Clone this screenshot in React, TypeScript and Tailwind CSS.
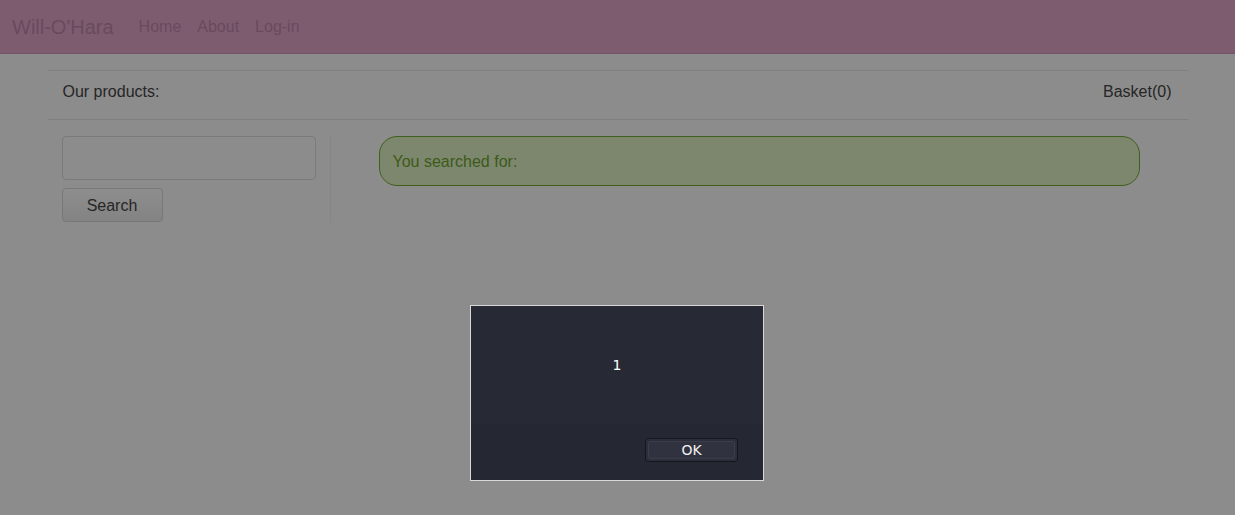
export default function App() {
  return (
    <div className="relative w-[1235px] h-[515px] overflow-hidden bg-[#8c8c8c] font-['Liberation_Sans',Arial,sans-serif]">
      {/* navbar */}
      <div className="h-[54px] bg-[#7e5c70] border-b border-[#74546a] flex items-center px-[12px]">
        <span className="text-[20px] text-[#694a5c] mr-[25px]">Will-O'Hara</span>
        <nav className="flex gap-[16px] text-[16px] text-[#694a5c]">
          <span>Home</span>
          <span>About</span>
          <span>Log-in</span>
        </nav>
      </div>

      <div className="w-[1140px] mx-auto mt-[16px]">
        <div className="h-[50px] border-y border-[#7f7f7f] flex items-center justify-between pl-[15px] pr-[16px] pb-[6px] text-[16px] text-[#262626]">
          <span>Our products:</span>
          <span>Basket(0)</span>
        </div>

        <div className="flex pt-[16px] pl-[14px]">
          <div className="w-[269px] border-r border-[#858585] flex flex-col">
            <div className="w-[254px] h-[44px] rounded-[4px] border border-[#7a7a7a] bg-[#8c8c8c]" />
            <button className="mt-[8px] w-[101px] h-[34px] rounded-[4px] border border-[#787878] bg-gradient-to-b from-[#8e8e8e] to-[#838383] text-[16px] text-[#262626] pt-[2px]">
              Search
            </button>
          </div>
          <div className="ml-[48px] w-[761px] h-[50px] rounded-[18px] border border-[#3f5f1c] bg-[#7c876d] flex items-center px-[13px] pt-[2px] text-[16px] text-[#3d5a1a]">
            You searched for:
          </div>
        </div>
      </div>

      {/* alert dialog */}
      <div className="absolute left-[470px] top-[305px] w-[294px] h-[176px] border border-[#d8d8d8] bg-[#272a35] flex flex-col font-['DejaVu_Sans',sans-serif]">
        <div className="h-[118px] flex items-center justify-center text-[14px] text-white">1</div>
        <div className="flex-1 bg-[#252832] flex justify-end items-start pt-[14px] pr-[25px]">
          <button className="w-[93px] h-[24px] rounded-[3px] border border-[#15171d] bg-[#2c2f3b] p-[2px]">
            <div className="w-full h-full rounded-[2px] border border-[#3a3d4a] bg-[#30333f] flex items-center justify-center text-[14px] text-[#f0f0f0] pt-[1px]">
              OK
            </div>
          </button>
        </div>
      </div>
    </div>
  );
}
